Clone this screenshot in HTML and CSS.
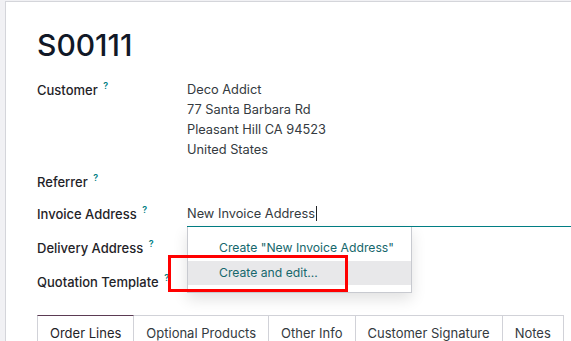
FILE: index.html
```html
<!DOCTYPE html>
<html lang="en">
<head>
    <meta charset="UTF-8">
    <meta name="viewport" content="width=device-width, initial-scale=1.0">
    <title>S00111 - Sales Order</title>
    <link rel="stylesheet" href="styles.css">
</head>
<body>

    <div class="sheet">
        <h1 class="order-name">S00111</h1>

        <div class="form-grid">
            <div class="label">Customer <sup>?</sup></div>
            <div class="value address">
                Deco Addict<br>
                77 Santa Barbara Rd<br>
                Pleasant Hill CA 94523<br>
                United States
            </div>

            <div class="label">Referrer <sup>?</sup></div>
            <div class="value"></div>

            <div class="label">Invoice Address <sup>?</sup></div>
            <div class="value field">
                <div class="input"><span class="typed">New Invoice Address</span></div>
                <ul class="autocomplete">
                    <li class="item">Create "New Invoice Address"</li>
                    <li class="item focus">Create and edit...</li>
                </ul>
            </div>

            <div class="label">Delivery Address <sup>?</sup></div>
            <div class="value"></div>

            <div class="label last">Quotation Template <sup>?</sup></div>
            <div class="value last"></div>
        </div>

        <div class="tabs">
            <div class="tab active">Order Lines</div>
            <div class="tab">Optional Products</div>
            <div class="tab">Other Info</div>
            <div class="tab">Customer Signature</div>
            <div class="tab">Notes</div>
        </div>
    </div>

    <!-- recuadro rojo de la captura -->
    <div class="highlight"></div>

</body>
</html>
```

FILE: styles.css
```css
body {
    margin: 0;
    background-color: #f1f1f4;
    font-family: Inter, "Noto Sans", sans-serif;
    font-size: 13px;
    color: #212529;
    overflow: hidden;
    height: 341px;
}

.sheet {
    margin: 1px 0 0 5px;
    background-color: white;
    border-top: 1px solid #d4d5da;
    border-left: 1px solid #d4d5da;
    padding: 25px 0 0 31px;
    height: 400px;
}

.order-name {
    margin: 0 0 11px 0;
    font-size: 30px;
    line-height: 36px;
    font-weight: 500;
    color: #111827;
}

.form-grid {
    display: grid;
    grid-template-columns: 150px 1fr;
    line-height: 20px;
}

.label,
.value {
    padding: 6px 0;
    min-height: 20px;
}

.label.last,
.value.last {
    padding-top: 8px;
}

.label {
    font-weight: 500;
    color: #1f2328;
}

.label sup {
    font-size: 9px;
    font-weight: 600;
    color: #017e84;
    margin-left: 2px;
    line-height: 0;
    vertical-align: 6px;
}

.value {
    color: #343a40;
    font-size: 12.8px;
}

.field {
    position: relative;
}

.input {
    padding-bottom: 2px;
    margin-bottom: -1px;
    border-bottom: 1px solid #017e84;
}

.typed {
    border-right: 1px solid #212529;
    padding-right: 1px;
}

.autocomplete {
    position: absolute;
    top: 29px;
    left: 0;
    width: 223px;
    margin: 0;
    padding: 9px 0 7px 0;
    list-style: none;
    background-color: white;
    border: 1px solid #c8cad0;
    border-top: none;
    box-shadow: 0 6px 14px rgba(0, 0, 0, 0.12);
    z-index: 2;
}

.item {
    padding: 2px 0 2px 31px;
    line-height: 20px;
    font-size: 12.2px;
    color: #16676c;
}

.item.focus {
    margin-top: 1px;
    background-color: #e8e8ea;
}

.tabs {
    display: flex;
    margin-top: 17px;
    border-bottom: 1px solid #d4d5da;
}

.tab {
    padding: 7px 12px 12px 12px;
    line-height: 20px;
    font-size: 13px;
    color: #343a40;
    border: 1px solid #d1d2d8;
    border-left: none;
}

.tab:first-child {
    border-left: 1px solid #d1d2d8;
}

.tab.active {
    border-top-color: #5b3b53;
    color: #1f2328;
}

.highlight {
    position: absolute;
    left: 168px;
    top: 255px;
    width: 174px;
    height: 31px;
    border: 3px solid #ff0000;
    z-index: 3;
}
```
